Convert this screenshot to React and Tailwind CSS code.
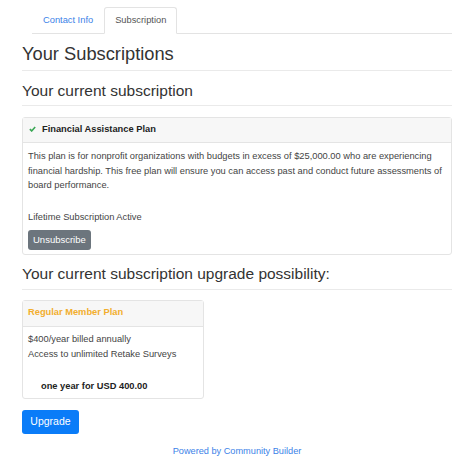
export default function App() {
  return (
    <div className="min-h-[476px] bg-white pl-[22px] pr-[22px] pt-[7px] text-[9.3px] text-[#444] font-['Liberation_Sans',Arial,sans-serif]">
      {/* Tabs */}
      <div className="ml-[10px] flex h-[27px] border-b border-[#e3e3e3]">
        <div className="mb-[-1px] flex h-[27px] items-center border border-transparent px-[10px] text-[#3b82e8]">
          Contact Info
        </div>
        <div className="mb-[-1px] flex h-[27px] items-center rounded-t-[3px] border border-[#e3e3e3] border-b-white bg-white px-[10px] text-[#555]">
          Subscription
        </div>
      </div>

      <h2 className="mt-[9px] text-[18.3px] leading-[22px] text-[#333]">Your Subscriptions</h2>
      <div className="mt-[5px] border-t border-[#eaeaea]" />

      <h3 className="mt-[10px] text-[15.5px] leading-[20px] text-[#333]">Your current subscription</h3>
      <div className="mt-[4px] border-t border-[#eaeaea]" />

      {/* current plan card */}
      <div className="mt-[11px] rounded-[3px] border border-[#e4e4e4]">
        <div className="flex h-[25px] items-center gap-[6px] border-b border-[#e4e4e4] bg-[#f7f7f7] px-[6px]">
          <svg width="7" height="6" viewBox="0 0 10 9" className="mt-[-3px]">
            <path d="M1 4.6 L3.8 7.4 L9 1.4" fill="none" stroke="#3aa755" strokeWidth="2.4" />
          </svg>
          <span className="font-bold text-[#222]">Financial Assistance Plan</span>
        </div>
        <div className="px-[5px] pt-[6px] pb-[4px] leading-[14.7px]">
          <p>
            This plan is for nonprofit organizations with budgets in excess of $25,000.00 who are experiencing
            financial hardship. This free plan will ensure you can access past and conduct future assessments of
            board performance.
          </p>
          <p className="mt-[17px]">Lifetime Subscription Active</p>
          <button className="mt-[5px] block h-[20px] rounded-[3px] bg-[#6c757d] px-[5px] text-[9.5px] leading-[20px] text-white">
            Unsubscribe
          </button>
        </div>
      </div>

      <h3 className="mt-[9px] text-[15.5px] leading-[20px] text-[#333]">
        Your current subscription upgrade possibility:
      </h3>
      <div className="mt-[5px] border-t border-[#eaeaea]" />

      {/* upgrade card */}
      <div className="mt-[10px] w-[182px] rounded-[3px] border border-[#e4e4e4]">
        <div className="flex h-[26px] items-center border-b border-[#e4e4e4] bg-[#f7f7f7] px-[5px]">
          <span className="font-bold text-[#f2ae2e]">Regular Member Plan</span>
        </div>
        <div className="px-[5px] pt-[5px] pb-[4px] leading-[15px]">
          <p>$400/year billed annually</p>
          <p>Access to unlimited Retake Surveys</p>
          <p className="mt-[17px] pl-[13px] font-bold text-[#222]">one year for USD 400.00</p>
        </div>
      </div>

      <button className="mt-[11px] block h-[24px] w-[57px] rounded-[3px] bg-[#0a7cf8] text-[10.5px] text-white">
        Upgrade
      </button>

      <div className="mt-[10px] text-center text-[9.2px] leading-[14px] text-[#3b82e8]">Powered by Community Builder</div>
    </div>
  );
}
